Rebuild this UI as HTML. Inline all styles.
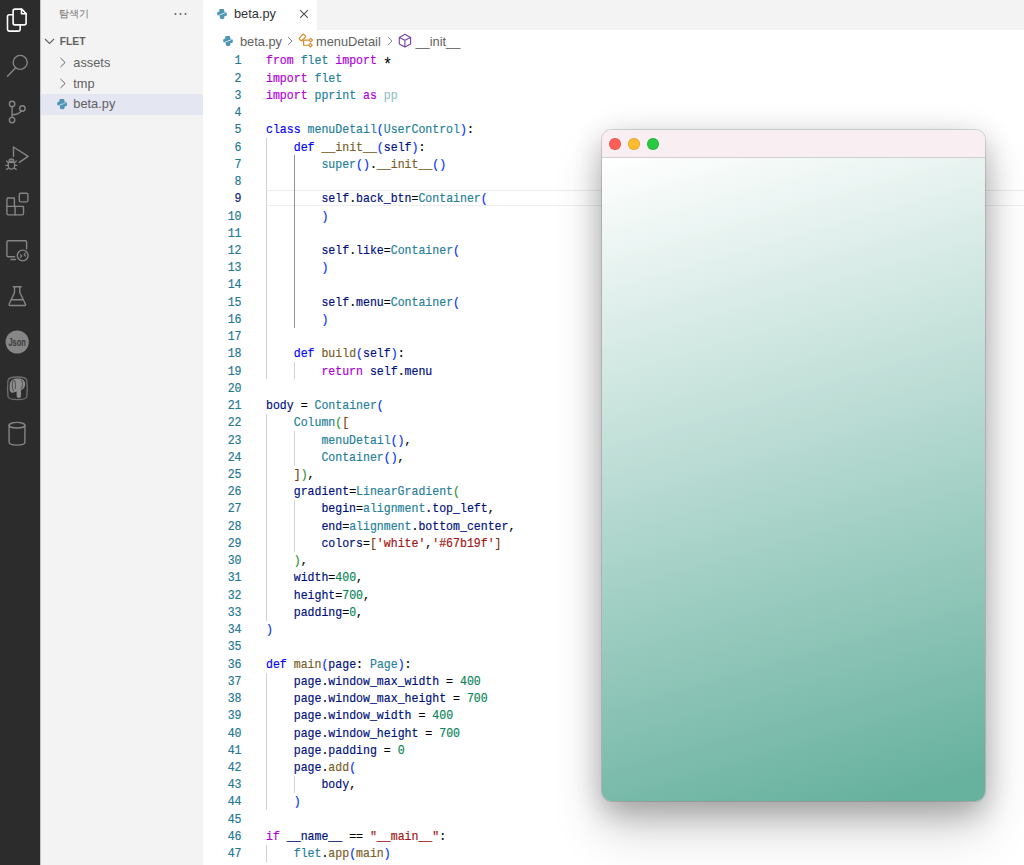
<!DOCTYPE html>
<html><head><meta charset="utf-8">
<style>
*{margin:0;padding:0;box-sizing:border-box}
html,body{width:1024px;height:865px;overflow:hidden;background:#fff;font-family:"Liberation Sans",sans-serif}
#act{position:absolute;left:0;top:0;width:40px;height:865px;background:#2c2c2c}
#act svg{position:absolute;left:0;top:0}
#side{position:absolute;left:40px;top:0;width:163px;height:865px;background:#f3f3f3;border-left:1px solid #c4c4c4}
.sh{position:absolute;left:18px;top:8.4px;font-size:9.6px;letter-spacing:-0.25px;color:#6f6f6f}
.dots{position:absolute;left:133.4px;top:8.3px;width:14px;height:12px}
.row{position:absolute;left:0;width:162px;height:21px;font-size:12.8px;color:#616161;line-height:21px}
.row.sel{background:#e4e6f1}
#tabs{position:absolute;left:203px;top:0;width:821px;height:30px;background:#f3f3f3}
.tab{position:absolute;left:0;top:0;width:114px;height:30px;background:#fff}
.tab .nm{position:absolute;left:31px;top:6px;font-size:12.8px;color:#333}
#crumb{position:absolute;left:203px;top:30px;width:821px;height:21px;background:#fff;font-size:12.8px;color:#616161}
#crumb span{position:absolute;top:4px}
#nums{position:absolute;left:203px;top:52.40px;-webkit-text-stroke:0.2px currentColor;width:44.67px;text-align:right;font-family:"Liberation Mono",monospace;font-size:13.40px;line-height:17.24px;color:#237893;transform:scaleX(0.8619);transform-origin:0 0}
#nums div{height:17.24px}
#nums .cur{color:#0b216f}
#code{position:absolute;left:266px;top:52.40px;-webkit-text-stroke:0.2px currentColor;font-family:"Liberation Mono",monospace;font-size:13.40px;line-height:17.24px;color:#000;transform:scaleX(0.8619);transform-origin:0 0}
.ln{height:17.24px;white-space:pre}
i{font-style:normal}
.ast{display:inline-block;transform:translateY(5px) scale(1.4);-webkit-text-stroke:0}
.k{color:#af00db}.s{color:#0000ff}.t{color:#267f99}.f{color:#795e26}.v{color:#001080}.n{color:#098658}.r{color:#a31515}
.b1{color:#0431fa}.b2{color:#319331}.b3{color:#7b3814}.o{color:#000}.x{color:#267f99;opacity:.5}
.curline{position:absolute;left:266.5px;top:189.60px;width:760px;height:16.6px;border-top:1.6px solid #ededed;border-bottom:1.6px solid #ededed}
.g{position:absolute;width:1px;background:#d3d3d3}
.g.act{background:#939393}
#win{position:absolute;left:601.6px;top:129.5px;width:383.5px;height:671.5px;border-radius:10px;overflow:hidden;background:linear-gradient(#f9eef2 0,#f9eef2 28px,#f4f8f7 28px,#6fb5a3 100%);box-shadow:0 0 0 1px rgba(0,0,0,.13),0 12px 28px rgba(0,0,0,.2),0 28px 50px rgba(0,0,0,.19),0 0 36px rgba(0,0,0,.07)}
#win .tb{position:absolute;left:0;top:0;width:384px;height:28px;background:#f9eef2;border-bottom:1px solid #cfcfcf}
#win .dot{position:absolute;top:8.5px;width:12px;height:12px;border-radius:50%;box-shadow:inset 0 0 0 0.7px rgba(0,0,0,.14)}
#win svg.grad{position:absolute;left:0;top:28px}
</style></head><body>

<div id="act">
<svg width="40" height="460" viewBox="0 0 40 460" fill="none" stroke-linecap="round" stroke-linejoin="round">
 <!-- explorer -->
 <g stroke="#ffffff" stroke-width="1.6">
  <path d="M13.1 22.9 V10.9 a1.8 1.8 0 0 1 1.8 -1.8 H21.7 L26.1 13.5 V23.1 a1.8 1.8 0 0 1 -1.8 1.8 H14.9 a1.8 1.8 0 0 1 -1.8 -1.8 Z"/>
  <path d="M21.5 9.3 V13.7 H25.9"/>
  <path d="M12.9 14.7 H9.3 a1.8 1.8 0 0 0 -1.8 1.8 V29.3 a1.8 1.8 0 0 0 1.8 1.8 H18.4 a1.8 1.8 0 0 0 1.8 -1.8 V25.5"/>
 </g>
 <g stroke="#858585" stroke-width="1.4">
  <!-- search -->
  <circle cx="20.2" cy="62.4" r="7"/>
  <path d="M7.5 76.3 L15.2 68.2"/>
  <!-- scm -->
  <circle cx="12.1" cy="104" r="2.7"/>
  <circle cx="22.4" cy="108.5" r="2.7"/>
  <circle cx="12.1" cy="120.1" r="2.7"/>
  <path d="M12.1 106.7 V117.4"/>
  <path d="M21.2 110.9 C19.8 113.6 18 114.6 12.1 114.8"/>
  <!-- debug -->
  <path d="M13.5 156.5 V147 L28.1 156.4 L19.3 162.4"/>
  <ellipse cx="11.4" cy="165.2" rx="3.3" ry="3.9"/>
  <path d="M9.1 160.9 C9.1 158.3 13.7 158.3 13.7 160.9" />
  <path d="M8.2 162.4 L6.5 161 M14.6 162.4 L16.3 161 M8 165.4 H6 M14.8 165.4 H16.8 M8.3 168.2 L6.6 169.4 M14.5 168.2 L16.2 169.4 M8.3 162.3 H14.5" stroke-width="1.3"/>
  <!-- extensions -->
  <path d="M7.5 198 H14.4 V206.4 H23.5 V213.5 a1.4 1.4 0 0 1 -1.4 1.4 H8.3 a1.4 1.4 0 0 1 -1.4 -1.4 V199.4 a1.4 1.4 0 0 1 1.4 -1.4 Z"/>
  <path d="M6.9 206.4 H14.8 M15.1 206.4 V214.9"/>
  <rect x="19.3" y="193.3" width="8.6" height="8.6" rx="1.4"/>
  <!-- remote -->
  <path d="M14.6 256.8 H8.2 a1.3 1.3 0 0 1 -1.3 -1.3 V242 a1.3 1.3 0 0 1 1.3 -1.3 H25.3 a1.3 1.3 0 0 1 1.3 1.3 V248.8"/>
  <path d="M11 259.5 H15.6"/>
  <circle cx="22.7" cy="255.5" r="5.4"/>
  <path d="M20.4 254.7 L21.8 256.1 L20.4 257.5 M25.4 253.2 L24 254.6 L25.4 256" stroke-width="1.1"/>
  <!-- flask -->
  <path d="M13.3 286.7 H21.2 M14.5 286.9 V292.5 L9.1 304.2 a0.9 0.9 0 0 0 0.8 1.3 H24.7 a0.9 0.9 0 0 0 0.8 -1.3 L19.8 292.5 V286.9 M11.6 299.8 H23"/>
  <!-- db -->
  <ellipse cx="17" cy="425.2" rx="7.9" ry="2.8"/>
  <path d="M9.1 425.2 V442.3 C9.1 446 24.9 446 24.9 442.3 V425.2"/>
 </g>
 <!-- json -->
 <circle cx="17.2" cy="342" r="11.6" fill="#868686"/>
 <text x="17.2" y="346" text-anchor="middle" font-family="Liberation Sans" font-size="10" font-weight="bold" fill="#3a3a3a" textLength="17.5" lengthAdjust="spacingAndGlyphs">Json</text>
 <!-- postgres -->
 <path d="M17.4 377 C22 377 26.6 377.8 26.8 380.5 C27.4 386 27.4 391 26.8 396.5 C26.6 399 22 399.6 17.4 399.6 C12.8 399.6 8.2 399 8 396.5 C7.4 391 7.4 386 8 380.5 C8.2 377.8 12.8 377 17.4 377 Z" fill="none" stroke="#6e6e6e" stroke-width="1.3"/>
 <path d="M17.5 378.6 C22.5 378.6 25.2 380.6 25.2 384 C25.2 387.2 23.4 389.4 21 390 V395.6 C21 397.4 20 398 18.8 398 C17.6 398 16.6 397.4 16.6 395.6 V391.6 C14.5 392.5 12.4 393 11.2 392.4 C9.6 391.4 9.4 387.4 9.8 384.4 C10.3 380.6 13 378.6 17.5 378.6 Z" fill="#8e8e8e"/>
 <path d="M13.2 380.2 C11.6 383.6 12 388.6 13.4 391 M15.2 388.6 C15.8 386 15.6 383 14.6 380.4 M21.4 380.2 C23.2 382.6 23 386.6 21 388.6" fill="none" stroke="#3c3c3c" stroke-width="0.8"/>
</svg>
</div>

<div id="side">
 <div class="sh">탐색기</div>
 <svg class="dots" viewBox="0 0 14 12"><circle cx="1.5" cy="6" r="1" fill="#616161"/><circle cx="6.5" cy="6" r="1" fill="#616161"/><circle cx="11.5" cy="6" r="1" fill="#616161"/></svg>
 <div class="row" style="top:31px">
  <svg style="position:absolute;left:3.2px;top:6px" width="11" height="8" viewBox="0 0 11 8"><path d="M1 2 L5.5 6.5 L10 2" fill="none" stroke="#616161" stroke-width="1.1"/></svg>
  <span style="position:absolute;left:18.7px;top:0;font-weight:bold;font-size:10.3px">FLET</span>
 </div>
 <div class="row" style="top:52.5px">
  <svg style="position:absolute;left:18px;top:4.6px" width="8" height="11" viewBox="0 0 8 11"><path d="M1.5 1 L6.1 5.5 L1.5 10" fill="none" stroke="#616161" stroke-width="1"/></svg>
  <span style="position:absolute;left:32.3px;top:-0.6px">assets</span>
 </div>
 <div class="row" style="top:73.5px">
  <svg style="position:absolute;left:18px;top:4.6px" width="8" height="11" viewBox="0 0 8 11"><path d="M1.5 1 L6.1 5.5 L1.5 10" fill="none" stroke="#616161" stroke-width="1"/></svg>
  <span style="position:absolute;left:32.3px;top:-0.6px">tmp</span>
 </div>
 <div class="row sel" style="top:94px">
  <svg style="position:absolute;left:15.9px;top:5.3px" width="10.3" height="10.3" viewBox="0 0 10.2 10.4"><path d="M3.3 0.1 H6.3 Q7.4 0.1 7.4 1.6 V2.8 H8.6 Q10.2 2.8 10.2 5.1 Q10.2 7.4 8.6 7.4 H7.6 V8.8 Q7.6 10.3 6.1 10.3 H4.2 Q2.8 10.3 2.8 8.8 V6.9 H1.5 Q0 6.9 0 4.9 Q0 2.8 1.5 2.8 H2.2 V1.6 Q2.2 0.1 3.3 0.1 Z" fill="#4f95b6"/><path d="M-0.2 7.6 C2.5 6.4 3.5 5.5 5.1 5.2 C6.8 4.9 7.8 4 10.4 2.8" fill="none" stroke="#e4e6f1" stroke-width="0.8"/></svg>
  <span style="position:absolute;left:32.3px;top:-0.6px">beta.py</span>
 </div>
</div>

<div id="tabs">
 <div class="tab">
  <svg style="position:absolute;left:14.1px;top:8.9px" width="10" height="10" viewBox="0 0 10.2 10.4"><path d="M3.3 0.1 H6.3 Q7.4 0.1 7.4 1.6 V2.8 H8.6 Q10.2 2.8 10.2 5.1 Q10.2 7.4 8.6 7.4 H7.6 V8.8 Q7.6 10.3 6.1 10.3 H4.2 Q2.8 10.3 2.8 8.8 V6.9 H1.5 Q0 6.9 0 4.9 Q0 2.8 1.5 2.8 H2.2 V1.6 Q2.2 0.1 3.3 0.1 Z" fill="#4f95b6"/><path d="M-0.2 7.6 C2.5 6.4 3.5 5.5 5.1 5.2 C6.8 4.9 7.8 4 10.4 2.8" fill="none" stroke="#ffffff" stroke-width="0.8"/></svg>
  <span class="nm">beta.py</span>
  <svg style="position:absolute;left:96px;top:9.2px" width="10" height="10" viewBox="0 0 10 10"><path d="M1.1 1.1 L8.9 8.9 M8.9 1.1 L1.1 8.9" stroke="#505050" stroke-width="1.1"/></svg>
 </div>
</div>

<div id="crumb">
 <svg style="position:absolute;left:19.9px;top:6.2px" width="10" height="10" viewBox="0 0 10.2 10.4"><path d="M3.3 0.1 H6.3 Q7.4 0.1 7.4 1.6 V2.8 H8.6 Q10.2 2.8 10.2 5.1 Q10.2 7.4 8.6 7.4 H7.6 V8.8 Q7.6 10.3 6.1 10.3 H4.2 Q2.8 10.3 2.8 8.8 V6.9 H1.5 Q0 6.9 0 4.9 Q0 2.8 1.5 2.8 H2.2 V1.6 Q2.2 0.1 3.3 0.1 Z" fill="#4f95b6"/><path d="M-0.2 7.6 C2.5 6.4 3.5 5.5 5.1 5.2 C6.8 4.9 7.8 4 10.4 2.8" fill="none" stroke="#ffffff" stroke-width="0.8"/></svg>
 <span style="left:37px">beta.py</span>
 <svg style="position:absolute;left:84px;top:6px" width="6" height="10" viewBox="0 0 6 10"><path d="M1 1 L5 5 L1 9" fill="none" stroke="#888" stroke-width="1"/></svg>
 <svg style="position:absolute;left:0;top:0" width="120" height="21" viewBox="0 0 120 21"><g fill="none" stroke="#d8892b" stroke-width="1.15" stroke-linejoin="round"><rect x="96.2" y="5.6" width="6.4" height="3.8" rx="0.9" transform="rotate(-45 99.4 7.5)"/><path d="M100.6 9.4 V15.2 H105.6 M100.6 10.1 H105.8"/><path d="M107.8 8.3 L109.6 10.1 L107.8 11.9 L106 10.1 Z M107.4 13.4 L109.2 15.2 L107.4 17 L105.6 15.2 Z"/></g></svg>
 <span style="left:113px">menuDetail</span>
 <svg style="position:absolute;left:184px;top:6px" width="6" height="10" viewBox="0 0 6 10"><path d="M1 1 L5 5 L1 9" fill="none" stroke="#888" stroke-width="1"/></svg>
 <svg style="position:absolute;left:0;top:0" width="220" height="21" viewBox="0 0 220 21"><g fill="none" stroke="#7a46a6" stroke-width="1.15" stroke-linejoin="round"><path d="M201.9 4.3 L207.6 7.4 V13.9 L201.9 17.1 L196.3 13.9 V7.4 Z M196.3 7.4 L201.9 10.3 L207.6 7.4 M201.9 10.3 V17.1"/></g></svg>
 <span style="left:212.5px">__init__</span>
</div>

<div class="curline"></div>
<div id="nums">
<div>1</div>
<div>2</div>
<div>3</div>
<div>4</div>
<div>5</div>
<div>6</div>
<div>7</div>
<div>8</div>
<div class="cur">9</div>
<div>10</div>
<div>11</div>
<div>12</div>
<div>13</div>
<div>14</div>
<div>15</div>
<div>16</div>
<div>17</div>
<div>18</div>
<div>19</div>
<div>20</div>
<div>21</div>
<div>22</div>
<div>23</div>
<div>24</div>
<div>25</div>
<div>26</div>
<div>27</div>
<div>28</div>
<div>29</div>
<div>30</div>
<div>31</div>
<div>32</div>
<div>33</div>
<div>34</div>
<div>35</div>
<div>36</div>
<div>37</div>
<div>38</div>
<div>39</div>
<div>40</div>
<div>41</div>
<div>42</div>
<div>43</div>
<div>44</div>
<div>45</div>
<div>46</div>
<div>47</div>
</div>
<div class="g" style="left:266.00px;top:138.10px;height:241.36px"></div>
<div class="g act" style="left:293.72px;top:155.34px;height:172.40px"></div>
<div class="g" style="left:293.72px;top:362.22px;height:17.24px"></div>
<div class="g" style="left:266.00px;top:413.94px;height:206.88px"></div>
<div class="g" style="left:293.72px;top:431.18px;height:34.48px"></div>
<div class="g" style="left:293.72px;top:500.14px;height:51.72px"></div>
<div class="g" style="left:266.00px;top:672.54px;height:137.92px"></div>
<div class="g" style="left:293.72px;top:775.98px;height:17.24px"></div>
<div class="g" style="left:266.00px;top:844.94px;height:17.24px"></div>
<div id="code">
<div class="ln"><i class="k">from</i> <i class="t">flet</i> <i class="k">import</i> <i class="o ast">*</i></div>
<div class="ln"><i class="k">import</i> <i class="t">flet</i></div>
<div class="ln"><i class="k">import</i> <i class="t">pprint</i> <i class="k">as</i> <i class="x">pp</i></div>
<div class="ln"></div>
<div class="ln"><i class="s">class</i> <i class="t">menuDetail</i><i class="b1">(</i><i class="t">UserControl</i><i class="b1">)</i><i class="o">:</i></div>
<div class="ln">    <i class="s">def</i> <i class="f">__init__</i><i class="b1">(</i><i class="v">self</i><i class="b1">)</i><i class="o">:</i></div>
<div class="ln">        <i class="t">super</i><i class="b1">()</i><i class="o">.</i><i class="f">__init__</i><i class="b1">()</i></div>
<div class="ln"></div>
<div class="ln">        <i class="v">self</i><i class="o">.</i><i class="v">back_btn</i><i class="o">=</i><i class="t">Container</i><i class="b1">(</i></div>
<div class="ln">        <i class="b1">)</i></div>
<div class="ln"></div>
<div class="ln">        <i class="v">self</i><i class="o">.</i><i class="v">like</i><i class="o">=</i><i class="t">Container</i><i class="b1">(</i></div>
<div class="ln">        <i class="b1">)</i></div>
<div class="ln"></div>
<div class="ln">        <i class="v">self</i><i class="o">.</i><i class="v">menu</i><i class="o">=</i><i class="t">Container</i><i class="b1">(</i></div>
<div class="ln">        <i class="b1">)</i></div>
<div class="ln"></div>
<div class="ln">    <i class="s">def</i> <i class="f">build</i><i class="b1">(</i><i class="v">self</i><i class="b1">)</i><i class="o">:</i></div>
<div class="ln">        <i class="k">return</i> <i class="v">self</i><i class="o">.</i><i class="v">menu</i></div>
<div class="ln"></div>
<div class="ln"><i class="v">body</i> <i class="o">=</i> <i class="t">Container</i><i class="b1">(</i></div>
<div class="ln">    <i class="t">Column</i><i class="b2">(</i><i class="b3">[</i></div>
<div class="ln">        <i class="t">menuDetail</i><i class="b1">()</i><i class="o">,</i></div>
<div class="ln">        <i class="t">Container</i><i class="b1">()</i><i class="o">,</i></div>
<div class="ln">    <i class="b3">]</i><i class="b2">)</i><i class="o">,</i></div>
<div class="ln">    <i class="v">gradient</i><i class="o">=</i><i class="t">LinearGradient</i><i class="b2">(</i></div>
<div class="ln">        <i class="v">begin</i><i class="o">=</i><i class="t">alignment</i><i class="o">.</i><i class="v">top_left</i><i class="o">,</i></div>
<div class="ln">        <i class="v">end</i><i class="o">=</i><i class="t">alignment</i><i class="o">.</i><i class="v">bottom_center</i><i class="o">,</i></div>
<div class="ln">        <i class="v">colors</i><i class="o">=</i><i class="b3">[</i><i class="r">&#x27;white&#x27;</i><i class="o">,</i><i class="r">&#x27;#67b19f&#x27;</i><i class="b3">]</i></div>
<div class="ln">    <i class="b2">)</i><i class="o">,</i></div>
<div class="ln">    <i class="v">width</i><i class="o">=</i><i class="n">400</i><i class="o">,</i></div>
<div class="ln">    <i class="v">height</i><i class="o">=</i><i class="n">700</i><i class="o">,</i></div>
<div class="ln">    <i class="v">padding</i><i class="o">=</i><i class="n">0</i><i class="o">,</i></div>
<div class="ln"><i class="b1">)</i></div>
<div class="ln"></div>
<div class="ln"><i class="s">def</i> <i class="f">main</i><i class="b1">(</i><i class="v">page</i><i class="o">:</i> <i class="t">Page</i><i class="b1">)</i><i class="o">:</i></div>
<div class="ln">    <i class="v">page</i><i class="o">.</i><i class="v">window_max_width</i> <i class="o">=</i> <i class="n">400</i></div>
<div class="ln">    <i class="v">page</i><i class="o">.</i><i class="v">window_max_height</i> <i class="o">=</i> <i class="n">700</i></div>
<div class="ln">    <i class="v">page</i><i class="o">.</i><i class="v">window_width</i> <i class="o">=</i> <i class="n">400</i></div>
<div class="ln">    <i class="v">page</i><i class="o">.</i><i class="v">window_height</i> <i class="o">=</i> <i class="n">700</i></div>
<div class="ln">    <i class="v">page</i><i class="o">.</i><i class="v">padding</i> <i class="o">=</i> <i class="n">0</i></div>
<div class="ln">    <i class="v">page</i><i class="o">.</i><i class="f">add</i><i class="b1">(</i></div>
<div class="ln">        <i class="v">body</i><i class="o">,</i></div>
<div class="ln">    <i class="b1">)</i></div>
<div class="ln"></div>
<div class="ln"><i class="k">if</i> <i class="v">__name__</i> <i class="o">==</i> <i class="r">&quot;__main__&quot;</i><i class="o">:</i></div>
<div class="ln">    <i class="t">flet</i><i class="o">.</i><i class="f">app</i><i class="b1">(</i><i class="f">main</i><i class="b1">)</i></div>
</div>

<div id="win">
 <div class="tb">
  <div class="dot" style="left:7.6px;background:#ff5f57"></div>
  <div class="dot" style="left:26.6px;background:#febc2e"></div>
  <div class="dot" style="left:45.6px;background:#28c840"></div>
 </div>
 <svg class="grad" width="384" height="644" viewBox="0 0 384 644"><defs><linearGradient id="lg" gradientUnits="userSpaceOnUse" x1="0" y1="0" x2="192" y2="672"><stop offset="0" stop-color="#ffffff"/><stop offset="1" stop-color="#67b19f"/></linearGradient></defs><rect width="384" height="644" fill="url(#lg)"/></svg>
</div>

</body></html>
